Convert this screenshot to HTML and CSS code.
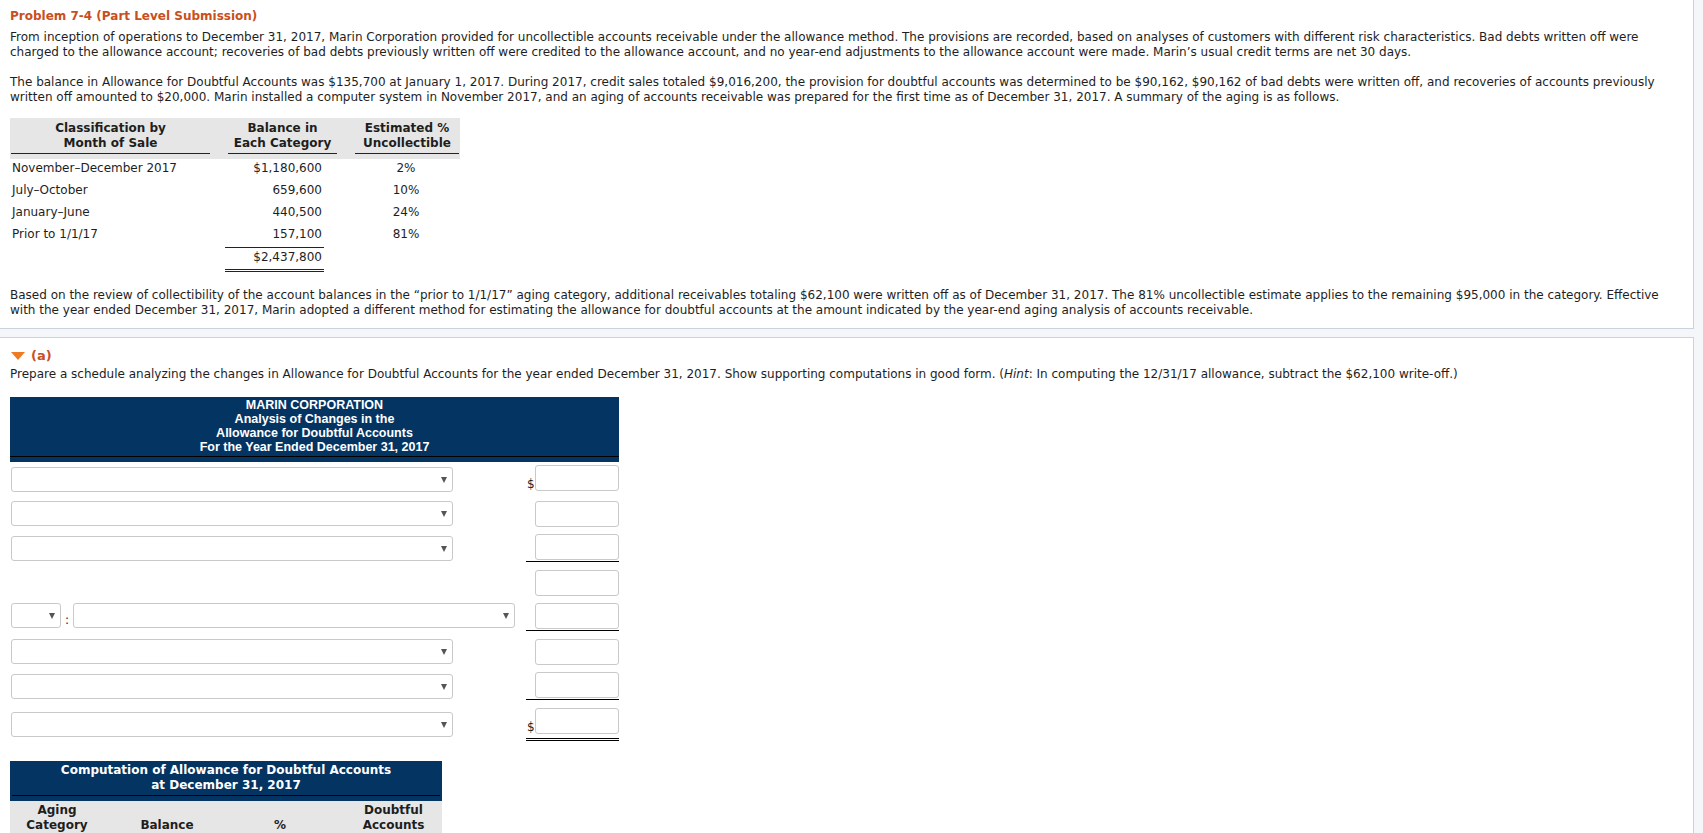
FILE: index.html
```html
<!DOCTYPE html>
<html>
<head>
<meta charset="utf-8">
<title>Problem 7-4</title>
<link rel="stylesheet" href="styles.css">
</head>
<body>
<div class="panel panel-problem">
  <div class="title">Problem 7-4 (Part Level Submission)</div>
  <p class="p1">From inception of operations to December 31, 2017, Marin Corporation provided for uncollectible accounts receivable under the allowance method. The provisions are recorded, based on analyses of customers with different risk characteristics. Bad debts written off were charged to the allowance account; recoveries of bad debts previously written off were credited to the allowance account, and no year-end adjustments to the allowance account were made. Marin’s usual credit terms are net 30 days.</p>
  <p class="p2">The balance in Allowance for Doubtful Accounts was $135,700 at January 1, 2017. During 2017, credit sales totaled $9,016,200, the provision for doubtful accounts was determined to be $90,162, $90,162 of bad debts were written off, and recoveries of accounts previously written off amounted to $20,000. Marin installed a computer system in November 2017, and an aging of accounts receivable was prepared for the first time as of December 31, 2017. A summary of the aging is as follows.</p>
  <div class="aging">
    <div class="aging-head">
      <div>Classification by<br>Month of Sale</div>
      <div>Balance in<br>Each Category</div>
      <div>Estimated %<br>Uncollectible</div>
    </div>
    <div class="aging-body">
      <div class="ab-cat">November–December 2017</div><div class="ab-amt">$1,180,600</div><div class="ab-pct">2%</div>
      <div class="ab-cat">July–October</div><div class="ab-amt">659,600</div><div class="ab-pct">10%</div>
      <div class="ab-cat">January–June</div><div class="ab-amt">440,500</div><div class="ab-pct">24%</div>
      <div class="ab-cat">Prior to 1/1/17</div><div class="ab-amt">157,100</div><div class="ab-pct">81%</div>
      <div class="ab-empty"></div><div class="ab-total">$2,437,800</div><div class="ab-empty"></div>
    </div>
  </div>
  <p class="p3">Based on the review of collectibility of the account balances in the “prior to 1/1/17” aging category, additional receivables totaling $62,100 were written off as of December 31, 2017. The 81% uncollectible estimate applies to the remaining $95,000 in the category. Effective with the year ended December 31, 2017, Marin adopted a different method for estimating the allowance for doubtful accounts at the amount indicated by the year-end aging analysis of accounts receivable.</p>
</div>
<div class="gap"></div>
<div class="panel panel-part">
  <div class="part-head">
    <svg class="tri" width="14" height="8" viewBox="0 0 14 8"><polygon points="0,0 14,0 7,8" fill="#ee7a22"/></svg>
    <span class="part-label">(a)</span>
  </div>
  <p class="instr">Prepare a schedule analyzing the changes in Allowance for Doubtful Accounts for the year ended December 31, 2017. Show supporting computations in good form. (<i>Hint</i>: In computing the 12/31/17 allowance, subtract the $62,100 write-off.)</p>
  <div class="sched-head"><div class="sched-head-inner">MARIN CORPORATION<br>Analysis of Changes in the<br>Allowance for Doubtful Accounts<br>For the Year Ended December 31, 2017</div></div>
  <div class="rows">
    <div class="row tall">
      <div class="row-left"><div class="sel mt2"></div></div>
      <div class="amt"><span class="dollar">$</span><div class="inp"></div></div>
    </div>
    <div class="row">
      <div class="row-left"><div class="sel"></div></div>
      <div class="amt"><div class="inp"></div></div>
    </div>
    <div class="row tall">
      <div class="row-left"><div class="sel mt2"></div></div>
      <div class="amt ul"><div class="inp"></div></div>
    </div>
    <div class="row">
      <div class="row-left"></div>
      <div class="amt"><div class="inp"></div></div>
    </div>
    <div class="row tall">
      <div class="row-left"><div class="sel small"></div><span class="colon">:</span><div class="sel long"></div></div>
      <div class="amt ul"><div class="inp"></div></div>
    </div>
    <div class="row">
      <div class="row-left"><div class="sel"></div></div>
      <div class="amt"><div class="inp"></div></div>
    </div>
    <div class="row tall">
      <div class="row-left"><div class="sel mt2"></div></div>
      <div class="amt ul"><div class="inp"></div></div>
    </div>
    <div class="row">
      <div class="row-left"><div class="sel mt4"></div></div>
      <div class="amt dbl"><span class="dollar">$</span><div class="inp"></div></div>
    </div>
  </div>
  <div class="comp">
    <div class="comp-head"><div class="comp-head-inner">Computation of Allowance for Doubtful Accounts<br>at December 31, 2017</div></div>
    <div class="comp-cols">
      <div>Aging<br>Category</div>
      <div>Balance</div>
      <div>%</div>
      <div class="last">Doubtful<br>Accounts</div>
    </div>
  </div>
</div>
</body>
</html>
```

FILE: styles.css
```css
* { box-sizing: border-box; }
html, body { margin: 0; padding: 0; overflow: hidden; }
body {
  width: 1703px;
  height: 833px;
  background: #f4f6f9;
  font-family: "DejaVu Sans", Verdana, sans-serif;
  font-size: 12px;
  line-height: 15px;
  color: #1e1e1e;
}
p { margin: 0; }

.panel {
  width: 1695px;
  margin-left: -1px;
  background: #fff;
  border: 1px solid #ccd3de;
  padding: 0 10px 0 10px;
}
.panel-problem { border-top: none; padding-top: 9px; padding-bottom: 10px; }
.gap { height: 8px; }
.panel-part { padding-top: 9px; padding-bottom: 60px; border-bottom: none; }

.title { font-weight: bold; color: #c94f1c; }
.p1 { margin-top: 6px; }
.p2 { margin-top: 15px; }
.p3 { margin-top: 16px; }

.aging { margin-top: 13px; width: 450px; }
.aging-head {
  display: grid;
  grid-template-columns: 199px 109px 104px;
  column-gap: 18px;
  padding: 3px 1px 5px 1px;
  background: #e6e6e6;
  font-weight: bold;
}
.aging-head > div {
  text-align: center;
  border-bottom: 1px solid #222;
  padding-bottom: 2px;
}
.aging-body {
  display: grid;
  grid-template-columns: 215px 99px 134px;
}
.ab-cat, .ab-amt, .ab-pct { padding: 2px 0 5px; }
.ab-cat { padding-left: 2px; }
.ab-amt { text-align: right; padding-right: 2px; }
.ab-pct { text-align: center; padding-left: 30px; }
.ab-total {
  text-align: right;
  padding: 2px 2px 4px 0;
  border-top: 1px solid #222;
  border-bottom: 3px double #222;
}

.part-head { display: flex; align-items: center; height: 18px; }
.tri { margin-left: 1px; display: block; }
.part-label { margin-left: 6px; font-weight: bold; font-size: 13px; line-height: 18px; color: #c94f1c; }
.instr { margin-top: 2px; }

.sched-head {
  margin-top: 15px;
  width: 609px;
  background: #033462;
  color: #fff;
  padding: 1px 0 5px;
  text-align: center;
  font-family: "Liberation Sans", Arial, sans-serif;
  font-weight: bold;
  font-size: 12.5px;
  line-height: 14px;
}
.sched-head-inner { border-bottom: 1px solid #000; padding-bottom: 2px; }

.rows { margin-top: 3px; width: 609px; }
.row { display: flex; align-items: flex-start; height: 33px; }
.row.tall { height: 36px; }
.row-left { width: 516px; display: flex; align-items: flex-start; }
.amt { width: 93px; display: flex; align-items: flex-end; justify-content: flex-end; }
.amt.ul { border-bottom: 1px solid #000; padding-bottom: 1px; }
.amt.dbl { border-bottom: 3px double #000; padding-bottom: 4px; }
.dollar { width: 9px; padding-left: 1px; line-height: 15px; margin-bottom: -1px; }
.inp {
  width: 84px;
  height: 26px;
  border: 1px solid #c9c9c9;
  border-radius: 3px;
  background: #fff;
}
.sel {
  position: relative;
  width: 442px;
  height: 25px;
  margin-left: 1px;
  border: 1px solid #c9c9c9;
  border-radius: 3px;
  background: #fff;
}
.sel::after {
  content: "";
  position: absolute;
  right: 5px;
  top: 50%;
  margin-top: -3px;
  border-left: 3.5px solid transparent;
  border-right: 3.5px solid transparent;
  border-top: 6px solid #555;
}
.sel.small { width: 50px; }
.sel.long { margin-left: 0; }
.colon { width: 12px; text-align: center; align-self: flex-end; line-height: 15px; }
.mt2 { margin-top: 2px; }
.mt4 { margin-top: 4px; }

.comp { margin-top: 20px; width: 432px; }
.comp-head {
  background: #033462;
  color: #fff;
  font-weight: bold;
  text-align: center;
  padding: 2px 0 5px;
}
.comp-head-inner { margin: 0 2px; border-bottom: 1px solid #000; padding-bottom: 2px; }
.comp-cols {
  display: grid;
  grid-template-columns: 94px 126px 100px 112px;
  align-items: end;
  padding: 2px 0 12px;
  background: #e6e6e6;
  font-weight: bold;
  text-align: center;
}
.comp-cols .last { padding-left: 15px; }
```
